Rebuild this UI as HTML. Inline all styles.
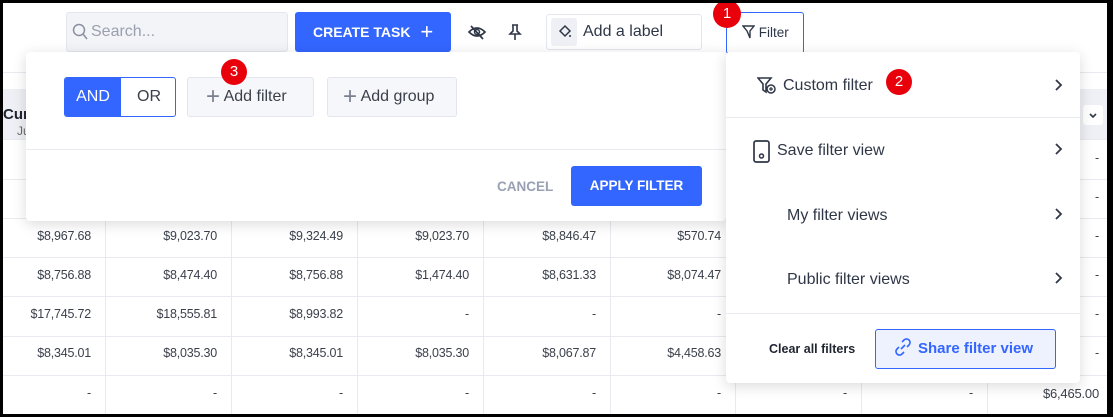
<!DOCTYPE html>
<html><head><meta charset="utf-8"><style>
*{box-sizing:border-box;margin:0;padding:0}
body{width:1113px;height:417px;overflow:hidden;background:#000;font-family:"Liberation Sans",sans-serif;position:relative}
#pg{position:absolute;left:3px;top:3px;width:1104px;height:411px;background:#fff;overflow:hidden}
.abs{position:absolute}
.num{position:absolute;font-size:12.5px;color:#3a3f4a;text-align:right;width:120px;letter-spacing:-0.2px}
.vl{position:absolute;width:1px;background:#e8eaf0}
.hl{position:absolute;height:1px;background:#e8eaf0;left:0;width:1104px}
.badge{position:absolute;width:26px;height:26px;border-radius:50%;background:#e8000b;color:#fff;font-size:15px;text-align:center;line-height:26px}
.btn{position:absolute;border:1px solid #e3e6ee;background:#f6f7fa;border-radius:3px;color:#3a3f4a;font-size:16px}
.mi{position:absolute;color:#2f3747;font-size:16px}
.chev{position:absolute}
</style></head><body><div id="pg">
<div class="abs" style="left:0;top:86px;width:1104px;height:50px;background:#eef0f5"></div>
<div class="hl" style="top:69px"></div>
<div class="hl" style="top:136px"></div>
<div class="hl" style="top:176px"></div>
<div class="hl" style="top:215px"></div>
<div class="hl" style="top:254px"></div>
<div class="hl" style="top:293px"></div>
<div class="hl" style="top:333px"></div>
<div class="hl" style="top:372px"></div>
<div class="vl" style="left:102px;top:136px;height:280px"></div>
<div class="vl" style="left:228px;top:136px;height:280px"></div>
<div class="vl" style="left:354px;top:136px;height:280px"></div>
<div class="vl" style="left:480px;top:136px;height:280px"></div>
<div class="vl" style="left:607px;top:136px;height:280px"></div>
<div class="vl" style="left:732px;top:136px;height:280px"></div>
<div class="vl" style="left:858px;top:136px;height:280px"></div>
<div class="vl" style="left:984px;top:136px;height:280px"></div>
<div class="abs" style="left:0;top:103px;font-weight:bold;font-size:15px;color:#1e2430">Cur</div>
<div class="abs" style="left:14px;top:121px;font-size:12px;color:#666">Ju</div>
<div class="abs" style="left:1080px;top:102px;width:20px;height:20px;background:#fff;border-radius:3px"><svg width="20" height="20" viewBox="0 0 20 20"><path d="M7 9l3 3 3-3" fill="none" stroke="#2f3747" stroke-width="1.6"/></svg></div>

<div class="num" style="left:-32px;top:226px">$8,967.68</div><div class="num" style="left:94px;top:226px">$9,023.70</div><div class="num" style="left:220px;top:226px">$9,324.49</div><div class="num" style="left:346px;top:226px">$9,023.70</div><div class="num" style="left:473px;top:226px">$8,846.47</div><div class="num" style="left:598px;top:226px">$570.74</div>
<div class="num" style="left:-32px;top:265px">$8,756.88</div><div class="num" style="left:94px;top:265px">$8,474.40</div><div class="num" style="left:220px;top:265px">$8,756.88</div><div class="num" style="left:346px;top:265px">$1,474.40</div><div class="num" style="left:473px;top:265px">$8,631.33</div><div class="num" style="left:598px;top:265px">$8,074.47</div>
<div class="num" style="left:-32px;top:304px">$17,745.72</div><div class="num" style="left:94px;top:304px">$18,555.81</div><div class="num" style="left:220px;top:304px">$8,993.82</div><div class="num" style="left:346px;top:304px">-</div><div class="num" style="left:473px;top:304px">-</div><div class="num" style="left:598px;top:304px">-</div>
<div class="num" style="left:-32px;top:343px">$8,345.01</div><div class="num" style="left:94px;top:343px">$8,035.30</div><div class="num" style="left:220px;top:343px">$8,345.01</div><div class="num" style="left:346px;top:343px">$8,035.30</div><div class="num" style="left:473px;top:343px">$8,067.87</div><div class="num" style="left:598px;top:343px">$4,458.63</div>
<div class="num" style="left:-32px;top:383px">-</div><div class="num" style="left:94px;top:383px">-</div><div class="num" style="left:220px;top:383px">-</div><div class="num" style="left:346px;top:383px">-</div><div class="num" style="left:473px;top:383px">-</div><div class="num" style="left:598px;top:383px">-</div><div class="num" style="left:724px;top:383px">-</div><div class="num" style="left:850px;top:383px">-</div><div class="num" style="left:976px;top:383px;font-size:13px">$6,465.00</div>
<div class="num" style="left:976px;top:148px">-</div><div class="num" style="left:976px;top:187px">-</div><div class="num" style="left:976px;top:226px">-</div><div class="num" style="left:976px;top:265px">-</div><div class="num" style="left:976px;top:304px">-</div><div class="num" style="left:976px;top:343px">-</div>

<div class="abs" style="left:63px;top:9px;width:222px;height:40px;background:#f3f4f8;border:1px solid #e3e6ee;border-radius:3px"></div>
<svg class="abs" style="left:69px;top:20px" width="16" height="18" viewBox="0 0 16 18"><circle cx="7" cy="7" r="5.5" fill="none" stroke="#8a90a0" stroke-width="1.5"/><line x1="11" y1="11" x2="15" y2="16" stroke="#8a90a0" stroke-width="1.5"/></svg>
<div class="abs" style="left:88px;top:20px;font-size:16px;color:#9aa0ae">Search...</div>
<div class="abs" style="left:292px;top:9px;width:156px;height:40px;background:#3366ff;border-radius:3px;color:#fff;font-weight:bold;font-size:14px;line-height:40px;padding-left:18px">CREATE TASK <span style="font-weight:normal;font-size:22px;vertical-align:-2px;margin-left:6px">+</span></div>
<svg class="abs" style="left:464px;top:21px" width="20" height="16" viewBox="0 0 20 16"><path d="M2 8 Q10 0 18 8 Q10 16 2 8Z" fill="none" stroke="#2f3747" stroke-width="1.7"/><circle cx="10" cy="8" r="2.5" fill="none" stroke="#2f3747" stroke-width="1.5"/><line x1="4" y1="2" x2="16" y2="15" stroke="#2f3747" stroke-width="1.7"/></svg>
<svg class="abs" style="left:505px;top:20px" width="14" height="18" viewBox="0 0 14 18"><path d="M4 2h6M5 2v6L2 11h10L9 8V2M7 11v6" fill="none" stroke="#2f3747" stroke-width="1.6"/></svg>
<div class="abs" style="left:543px;top:11px;width:156px;height:36px;border:1px solid #e3e6ee;border-radius:3px"></div>
<div class="abs" style="left:548px;top:15px;width:26px;height:28px;background:#eef0f5;border-radius:3px"><svg width="26" height="28" viewBox="0 0 26 28"><path d="M9 13l5-5 5 5-5 5z" fill="none" stroke="#2f3747" stroke-width="1.5"/><circle cx="19" cy="18" r="1" fill="#2f3747"/></svg></div>
<div class="abs" style="left:580px;top:20px;font-size:16px;color:#2f3747">Add a label</div>
<div class="abs" style="left:723px;top:9px;width:78px;height:42px;border:1px solid #3366ff;border-radius:3px;background:#fff;font-size:13.5px;color:#2f3747;line-height:40px;padding-left:15px">
<svg width="13" height="14" viewBox="0 0 13 14" style="vertical-align:-2px"><path d="M1 1h11L8 6v7L5 6Z" fill="none" stroke="#2f3747" stroke-width="1.4"/></svg> Filter</div>
<div class="badge" style="left:710px;top:-3px;width:28px;height:28px;line-height:28px">1</div>

<div class="abs" style="left:23px;top:49px;width:700px;height:169px;background:#fff;border-radius:4px;box-shadow:0 3px 14px rgba(0,0,0,.15)">
 <div class="abs" style="left:38px;top:25px;width:112px;height:40px;border:1px solid #3366ff;border-radius:3px;overflow:hidden">
  <div class="abs" style="left:0;top:0;width:56px;height:38px;background:#3366ff;color:#fff;font-size:16px;text-align:center;line-height:38px">AND</div>
  <div class="abs" style="left:56px;top:0;width:56px;height:38px;color:#3a3f4a;font-size:16px;text-align:center;line-height:38px">OR</div>
 </div>
 <div class="btn" style="left:161px;top:25px;width:127px;height:40px;line-height:38px;padding-left:18px"><span style="font-size:24px;color:#7a8090;vertical-align:-3px;font-weight:300">+</span> Add filter</div>
 <div class="btn" style="left:301px;top:25px;width:130px;height:40px;line-height:38px;padding-left:15px"><span style="font-size:24px;color:#7a8090;vertical-align:-3px">+</span> Add group</div>
 <div class="abs" style="left:0;top:97px;width:700px;height:1px;background:#e8eaf0"></div>
 <div class="abs" style="left:471px;top:127px;font-size:13.5px;font-weight:bold;color:#9aa0b4">CANCEL</div>
 <div class="abs" style="left:545px;top:114px;width:131px;height:40px;background:#3366ff;border-radius:3px;color:#fff;font-weight:bold;font-size:13.5px;text-align:center;line-height:40px">APPLY FILTER</div>
</div>
<div class="badge" style="left:218px;top:56px">3</div>

<div class="abs" style="left:723px;top:49px;width:354px;height:331px;background:#fff;border-radius:4px;box-shadow:0 3px 14px rgba(0,0,0,.15)">
 <svg class="abs" style="left:31px;top:24px" width="20" height="20" viewBox="0 0 20 20"><path d="M1 2h13L9 8v8L6 14V8Z" fill="none" stroke="#2f3747" stroke-width="1.6"/><circle cx="14" cy="13" r="4" fill="#fff" stroke="#2f3747" stroke-width="1.5"/><path d="M14 11v4M12 13h4" stroke="#2f3747" stroke-width="1.2"/></svg>
 <div class="mi" style="left:57px;top:25px">Custom filter</div>
 <svg class="chev" style="left:327px;top:25px" width="10" height="16" viewBox="0 0 10 16"><path d="M3 3l5 5-5 5" fill="none" stroke="#2f3747" stroke-width="1.8"/></svg>
 <div class="abs" style="left:0;top:65px;width:354px;height:1px;background:#e8eaf0"></div>
 <svg class="abs" style="left:27px;top:88px" width="18" height="24" viewBox="0 0 18 24"><rect x="1" y="1" width="15" height="21" rx="2" fill="none" stroke="#2f3747" stroke-width="1.7"/><circle cx="8.5" cy="16" r="2" fill="none" stroke="#2f3747" stroke-width="1.5"/></svg>
 <div class="mi" style="left:51px;top:90px">Save filter view</div>
 <svg class="chev" style="left:327px;top:89px" width="10" height="16" viewBox="0 0 10 16"><path d="M3 3l5 5-5 5" fill="none" stroke="#2f3747" stroke-width="1.8"/></svg>
 <div class="mi" style="left:61px;top:155px">My filter views</div>
 <svg class="chev" style="left:327px;top:154px" width="10" height="16" viewBox="0 0 10 16"><path d="M3 3l5 5-5 5" fill="none" stroke="#2f3747" stroke-width="1.8"/></svg>
 <div class="mi" style="left:61px;top:219px">Public filter views</div>
 <svg class="chev" style="left:327px;top:218px" width="10" height="16" viewBox="0 0 10 16"><path d="M3 3l5 5-5 5" fill="none" stroke="#2f3747" stroke-width="1.8"/></svg>
 <div class="abs" style="left:0;top:261px;width:354px;height:1px;background:#e8eaf0"></div>
 <div class="abs" style="left:43px;top:290px;font-size:12.5px;font-weight:bold;color:#1e2430">Clear all filters</div>
 <div class="abs" style="left:149px;top:277px;width:181px;height:40px;border:1px solid #3366ff;background:#eef2ff;border-radius:3px;color:#3366ff;font-weight:bold;font-size:15px;line-height:38px;padding-left:18px">
 <svg width="18" height="18" viewBox="0 0 18 18" style="vertical-align:-3px;margin-right:6px"><path d="M7 11l4-4M8 4l2-2a3.5 3.5 0 015 5l-2 2M10 14l-2 2a3.5 3.5 0 01-5-5l2-2" fill="none" stroke="#3366ff" stroke-width="1.6"/></svg>Share filter view</div>
</div>
<div class="badge" style="left:883px;top:66px">2</div>
</div></body></html>
